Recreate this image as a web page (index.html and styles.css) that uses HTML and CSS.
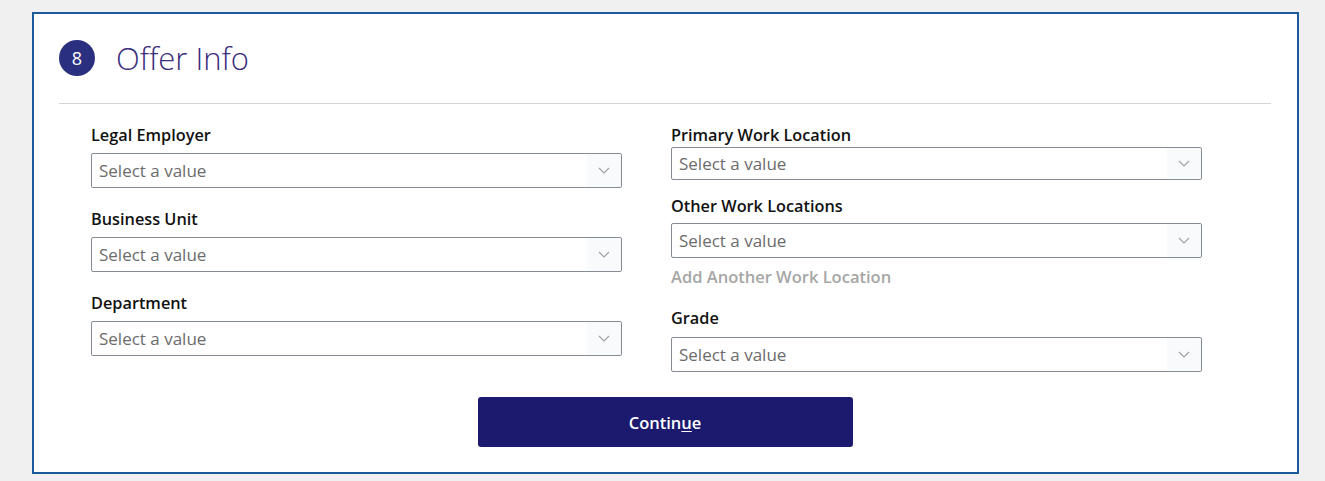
FILE: index.html
```html
<!DOCTYPE html>
<html lang="en">
<head>
<meta charset="utf-8">
<title>Offer Info</title>
<link rel="stylesheet" href="styles.css">
</head>
<body>
<section class="card">
  <header class="card-header">
    <span class="step">8</span>
    <h2 class="title">Offer Info</h2>
  </header>
  <hr class="divider">
  <div class="fields">
    <div class="col col-left">
      <div class="field">
        <label class="label">Legal Employer</label>
        <div class="select"><span class="placeholder">Select a value</span><span class="chev"><svg width="12" height="7" viewBox="0 0 12 7"><polyline points="1,1 6,6 11,1" fill="none" stroke="#9ea3a8" stroke-width="1.2"/></svg></span></div>
      </div>
      <div class="field">
        <label class="label">Business Unit</label>
        <div class="select"><span class="placeholder">Select a value</span><span class="chev"><svg width="12" height="7" viewBox="0 0 12 7"><polyline points="1,1 6,6 11,1" fill="none" stroke="#9ea3a8" stroke-width="1.2"/></svg></span></div>
      </div>
      <div class="field">
        <label class="label">Department</label>
        <div class="select"><span class="placeholder">Select a value</span><span class="chev"><svg width="12" height="7" viewBox="0 0 12 7"><polyline points="1,1 6,6 11,1" fill="none" stroke="#9ea3a8" stroke-width="1.2"/></svg></span></div>
      </div>
    </div>
    <div class="col col-right">
      <div class="field field-primary">
        <label class="label">Primary Work Location</label>
        <div class="select select-short"><span class="placeholder">Select a value</span><span class="chev"><svg width="12" height="7" viewBox="0 0 12 7"><polyline points="1,1 6,6 11,1" fill="none" stroke="#9ea3a8" stroke-width="1.2"/></svg></span></div>
      </div>
      <div class="field field-other">
        <label class="label">Other Work Locations</label>
        <div class="select"><span class="placeholder">Select a value</span><span class="chev"><svg width="12" height="7" viewBox="0 0 12 7"><polyline points="1,1 6,6 11,1" fill="none" stroke="#9ea3a8" stroke-width="1.2"/></svg></span></div>
        <a class="add-link">Add Another Work Location</a>
      </div>
      <div class="field field-grade">
        <label class="label">Grade</label>
        <div class="select"><span class="placeholder">Select a value</span><span class="chev"><svg width="12" height="7" viewBox="0 0 12 7"><polyline points="1,1 6,6 11,1" fill="none" stroke="#9ea3a8" stroke-width="1.2"/></svg></span></div>
      </div>
    </div>
  </div>
  <div class="actions">
    <button class="btn-primary" type="button">Contin<u>u</u>e</button>
  </div>
</section>
</body>
</html>
```
FILE: styles.css
```css
* { box-sizing: border-box; }
html, body { margin: 0; }
body {
  background: #f0f0f0;
  padding: 12px 26px 0 32px;
  font-family: "Open Sans", "Noto Sans", sans-serif;
  color: #111;
}
.card {
  width: 1267px;
  height: 462px;
  background: #fff;
  border: 2px solid #1b5b9c;
  padding: 26px 26px 0 25px;
}
.card-header {
  display: flex;
  align-items: center;
  height: 36px;
}
.step {
  width: 36px;
  height: 36px;
  border-radius: 50%;
  background: #2b2f7f;
  color: #fff;
  display: flex;
  align-items: center;
  justify-content: center;
  font-size: 18px;
}
.title {
  margin: 0 0 0 21px;
  font-weight: 300;
  font-size: 31px;
  color: #3a2d7c;
  line-height: 36px;
}
.divider {
  margin: 27px 0 0 0;
  border: 0;
  border-top: 1px solid #d4d4d4;
  height: 0;
}
.fields {
  display: grid;
  grid-template-columns: 531px 531px;
  column-gap: 49px;
  margin: 20px 0 0 32px;
}
.col { display: flex; flex-direction: column; }
.field { display: flex; flex-direction: column; }
.col-left .field + .field { margin-top: 20px; }
.col-left .field .label { margin-bottom: 7px; }
.label {
  font-size: 16.3px;
  font-weight: 600;
  line-height: 22px;
  color: #121212;
}
.select {
  height: 35px;
  border: 1px solid #858b93;
  border-radius: 2px;
  display: flex;
  align-items: center;
  justify-content: space-between;
  background: #fff;
}
.select-short { height: 33px; }
.placeholder {
  padding-left: 7px;
  font-size: 17px;
  color: #6c6c6c;
}
.chev {
  width: 34px;
  height: 100%;
  background: #f9fafb;
  display: flex;
  align-items: center;
  justify-content: center;
  border-radius: 0 2px 2px 0;
}
.field-primary .label { margin-bottom: 1px; }
.field-other { margin-top: 15px; }
.field-other .label { margin-bottom: 6px; }
.add-link {
  margin-top: 8px;
  font-size: 16.5px;
  line-height: 22px;
  color: #a6a6a6;
  font-weight: 600;
}
.field-grade { margin-top: 19px; }
.field-grade .label { margin-bottom: 8px; }
.actions {
  display: flex;
  justify-content: center;
  margin-top: 25px;
}
.btn-primary {
  width: 375px;
  height: 50px;
  border: 0;
  border-radius: 3px;
  background: #1b1a6e;
  color: #fff;
  font-family: "Open Sans", "Noto Sans", sans-serif;
  font-size: 16.5px;
  font-weight: 600;
}
.btn-primary u { text-underline-offset: 2px; }
```
